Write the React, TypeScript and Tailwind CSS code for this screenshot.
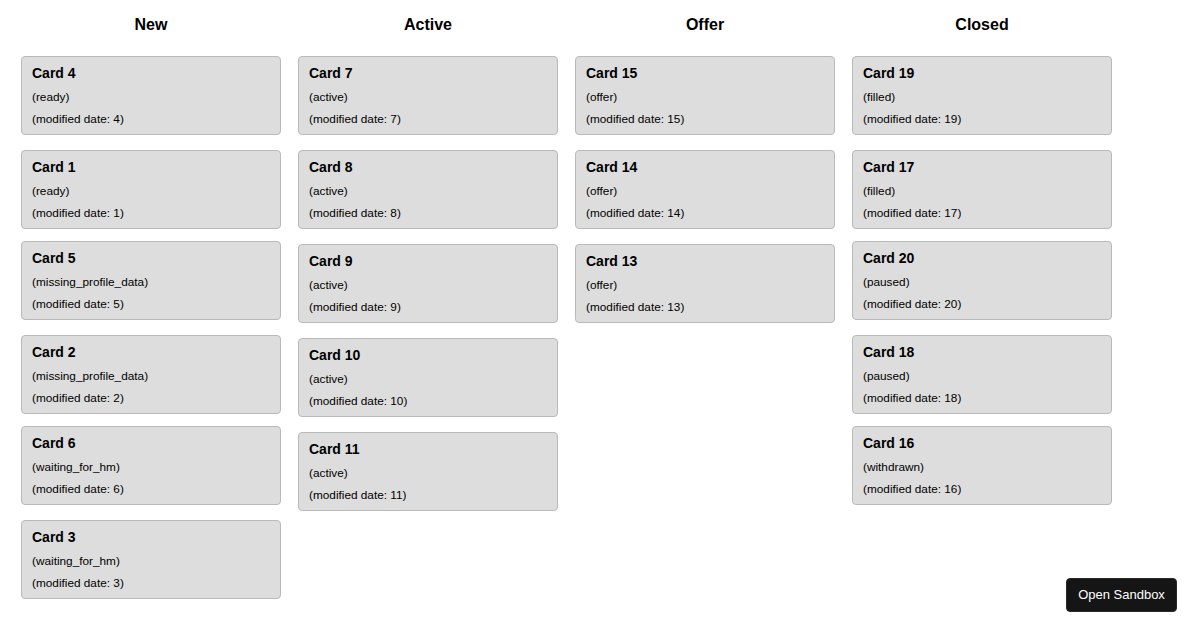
import React from 'react';

type Card = { id: number; status: string };

const columns: { title: string; groups: Card[][] }[] = [
  {
    title: 'New',
    groups: [
      [
        { id: 4, status: 'ready' },
        { id: 1, status: 'ready' },
      ],
      [
        { id: 5, status: 'missing_profile_data' },
        { id: 2, status: 'missing_profile_data' },
      ],
      [
        { id: 6, status: 'waiting_for_hm' },
        { id: 3, status: 'waiting_for_hm' },
      ],
    ],
  },
  {
    title: 'Active',
    groups: [
      [
        { id: 7, status: 'active' },
        { id: 8, status: 'active' },
        { id: 9, status: 'active' },
        { id: 10, status: 'active' },
        { id: 11, status: 'active' },
      ],
    ],
  },
  {
    title: 'Offer',
    groups: [
      [
        { id: 15, status: 'offer' },
        { id: 14, status: 'offer' },
        { id: 13, status: 'offer' },
      ],
    ],
  },
  {
    title: 'Closed',
    groups: [
      [
        { id: 19, status: 'filled' },
        { id: 17, status: 'filled' },
      ],
      [
        { id: 20, status: 'paused' },
        { id: 18, status: 'paused' },
      ],
      [{ id: 16, status: 'withdrawn' }],
    ],
  },
];

const KanbanCard: React.FC<{ card: Card }> = ({ card }) => (
  <div className="h-[79px] bg-[#dddddd] border border-[#b9b9b9] rounded-[4px] pl-[10px] pt-[6px]">
    <div className="text-[14px] leading-5 font-bold text-black">Card {card.id}</div>
    <div className="mt-[6px] text-[11.8px] leading-4 text-black">({card.status})</div>
    <div className="mt-[6px] text-[11.8px] leading-4 text-black">(modified date: {card.id})</div>
  </div>
);

export default function App() {
  return (
    <div className="min-h-[630px] bg-white pl-[21px] pt-[15px] font-['Liberation_Sans',Arial,sans-serif]">
      <div className="flex gap-[17px]">
        {columns.map((col) => (
          <div key={col.title} className="w-[260px] flex flex-col">
            <h2 className="text-[16px] leading-5 font-bold text-black text-center mb-[21px]">
              {col.title}
            </h2>
            <div className="flex flex-col gap-[12px]">
              {col.groups.map((group, i) => (
                <div key={i} className="flex flex-col gap-[15px]">
                  {group.map((card) => (
                    <KanbanCard key={card.id} card={card} />
                  ))}
                </div>
              ))}
            </div>
          </div>
        ))}
      </div>

      {/* sandbox overlay button */}
      <button className="fixed right-[23px] bottom-[18px] w-[111px] h-[34px] rounded-[4px] bg-[#151515] text-white text-[13px] border border-[#2a2a2a]">
        Open Sandbox
      </button>
    </div>
  );
}
